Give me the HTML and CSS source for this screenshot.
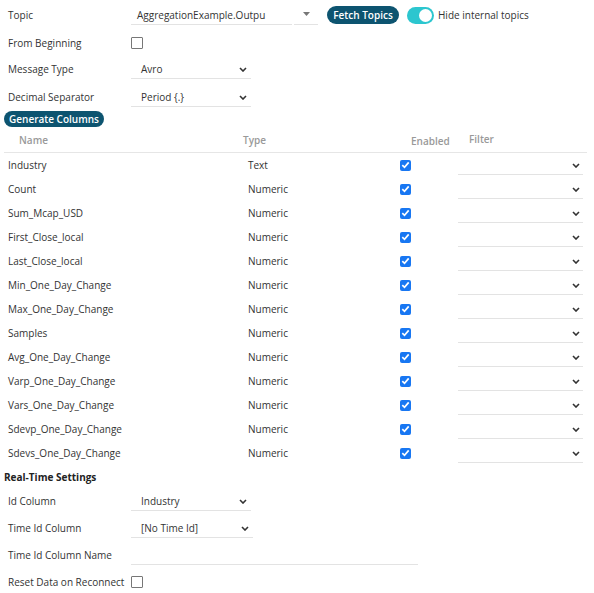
FILE: index.html
```html
<!DOCTYPE html>
<html>
<head>
<meta charset="utf-8">
<link rel="stylesheet" href="styles.css">
</head>
<body>
<div class="page">
  <div class="form-row r1">
    <div class="label">Topic</div>
    <div class="topic-field">
      <div class="topic-input">AggregationExample.Outpu</div>
      <div class="topic-btn"><svg width="7" height="4" viewBox="0 0 7 4"><path d="M0 0H7L3.5 4Z" fill="#777"/></svg></div>
    </div>
    <button class="pill fetch">Fetch Topics</button>
    <div class="toggle"><div class="knob"></div></div>
    <div class="toggle-label">Hide internal topics</div>
  </div>
  <div class="form-row r2">
    <div class="label">From Beginning</div>
    <div class="cb"></div>
  </div>
  <div class="form-row r3">
    <div class="label">Message Type</div>
    <div class="select w120"><span>Avro</span><svg class="chev" width="8" height="5" viewBox="0 0 8 5"><path d="M1 1L4 4L7 1" fill="none" stroke="#333" stroke-width="1.6"/></svg></div>
  </div>
  <div class="form-row r4">
    <div class="label">Decimal Separator</div>
    <div class="select w120"><span>Period {.}</span><svg class="chev" width="8" height="5" viewBox="0 0 8 5"><path d="M1 1L4 4L7 1" fill="none" stroke="#333" stroke-width="1.6"/></svg></div>
  </div>
  <button class="pill gen">Generate Columns</button>

  <div class="table">
    <div class="thead">
      <div class="th c-name">Name</div>
      <div class="th c-type">Type</div>
      <div class="th c-en">Enabled</div>
      <div class="th c-filter">Filter</div>
    </div>
    <div id="rows"></div>
  </div>

  <div class="section-title">Real-Time Settings</div>
  <div class="rt-row">
    <div class="label">Id Column</div>
    <div class="select w120"><span>Industry</span><svg class="chev" width="8" height="5" viewBox="0 0 8 5"><path d="M1 1L4 4L7 1" fill="none" stroke="#333" stroke-width="1.6"/></svg></div>
  </div>
  <div class="rt-row">
    <div class="label">Time Id Column</div>
    <div class="select w122"><span>[No Time Id]</span><svg class="chev" width="8" height="5" viewBox="0 0 8 5"><path d="M1 1L4 4L7 1" fill="none" stroke="#333" stroke-width="1.6"/></svg></div>
  </div>
  <div class="rt-row">
    <div class="label">Time Id Column Name</div>
    <div class="select w287"></div>
  </div>
  <div class="rt-row">
    <div class="label">Reset Data on Reconnect</div>
    <div class="cb"></div>
  </div>
</div>
<script src="script.js"></script>
</body>
</html>
```
FILE: script.js
```js
var data = [
  ["Industry","Text"],["Count","Numeric"],["Sum_Mcap_USD","Numeric"],
  ["First_Close_local","Numeric"],["Last_Close_local","Numeric"],
  ["Min_One_Day_Change","Numeric"],["Max_One_Day_Change","Numeric"],
  ["Samples","Numeric"],["Avg_One_Day_Change","Numeric"],
  ["Varp_One_Day_Change","Numeric"],["Vars_One_Day_Change","Numeric"],
  ["Sdevp_One_Day_Change","Numeric"],["Sdevs_One_Day_Change","Numeric"]
];
var html = "";
data.forEach(function (d) {
  html += '<div class="tr">' +
    '<div class="td c-name">' + d[0] + '</div>' +
    '<div class="td c-type">' + d[1] + '</div>' +
    '<div class="td c-en"><div class="cbx"><svg width="9" height="8" viewBox="0 0 9 8"><path d="M1.3 4.2L3.5 6.3L7.7 1.4" fill="none" stroke="#fff" stroke-width="1.7"/></svg></div></div>' +
    '<div class="td c-filter"><div class="fsel"><svg class="chev" width="8" height="5" viewBox="0 0 8 5"><path d="M1 1L4 4L7 1" fill="none" stroke="#333" stroke-width="1.6"/></svg></div></div>' +
    '</div>';
});
document.getElementById("rows").innerHTML = html;
```
FILE: styles.css
```css
* { box-sizing: border-box; }
html, body { margin: 0; padding: 0; background: #fff; }
body {
  font-family: "Open Sans", "Noto Sans", sans-serif;
  font-size: 10px;
  color: #333;
}
.page { padding-top: 3px; width: 594px; }
.form-row {
  display: flex;
  align-items: center;
  height: 24px;
  padding-left: 8px;
}
.r1 { margin-bottom: 4px; }
.r2 { margin-bottom: 2px; }
.r3 { margin-bottom: 4px; }
.label { width: 123px; flex: none; white-space: nowrap; }
.topic-field { display: flex; height: 20px; width: 187px; }
.topic-input {
  width: 161px;
  padding-left: 6px;
  display: flex;
  align-items: center;
  border-bottom: 1px solid #e3e3e3;
  overflow: hidden;
  white-space: nowrap;
}
.topic-btn {
  width: 24px;
  margin-left: 2px;
  display: flex;
  align-items: center;
  justify-content: center;
  border-bottom: 1px solid #e3e3e3;
  padding-bottom: 1px;
}
.pill {
  border: none;
  background: #0d5470;
  color: #fff;
  font-family: inherit;
  font-weight: 600;
  font-size: 10px;
  border-radius: 9px;
  padding: 0;
  display: flex;
  align-items: center;
  justify-content: center;
}
.fetch { width: 72px; height: 18px; margin-left: 9px; }
.toggle {
  width: 27px;
  height: 17px;
  margin-left: 8px;
  border-radius: 9px;
  background: #2cc6cf;
  position: relative;
}
.knob {
  position: absolute;
  right: 2px;
  top: 2px;
  width: 13px;
  height: 13px;
  border-radius: 50%;
  background: #fff;
}
.toggle-label { margin-left: 4px; }
.cb {
  width: 12px;
  height: 12px;
  border: 1px solid #777;
  border-radius: 1px;
}
.select {
  height: 20px;
  display: flex;
  align-items: center;
  justify-content: space-between;
  padding-left: 10px;
  padding-right: 4px;
  border-bottom: 1px solid #e3e3e3;
}
.w120 { width: 120px; }
.w122 { width: 122px; }
.w287 { width: 287px; }
.chev { display: block; margin-top: 1px; }
.gen { width: 100px; height: 16px; margin: 2px 0 0 4px; border-radius: 8px; }

.table { margin: 0 7px 0 4px; }
.thead {
  display: flex;
  align-items: center;
  height: 26px;
  border-bottom: 1px solid #e6e6e6;
  color: #999;
  font-weight: 600;
}
.tr { display: flex; align-items: center; height: 24px; }
.c-name { width: 240px; flex: none; }
.c-type { width: 156px; flex: none; }
.c-en { width: 58px; flex: none; }
.c-filter { width: 125px; flex: none; }
.td.c-name { padding-left: 4px; }
.td.c-type { padding-left: 4px; }
.th.c-name { padding-left: 15px; }
.th.c-type { padding-left: 0; margin-left: -1px; margin-right: 1px; }
.th.c-en { padding-left: 11px; margin-top: 2px; white-space: nowrap; }
.th.c-filter { padding-left: 11px; margin-top: -2px; }
.cbx {
  width: 11px;
  height: 11px;
  border-radius: 2px;
  background: #1877f2;
  display: flex;
  align-items: center;
  justify-content: center;
}
.cbx svg { display: block; }
.fsel {
  height: 20px;
  display: flex;
  align-items: center;
  justify-content: flex-end;
  padding-right: 3px;
  border-bottom: 1px solid #e3e3e3;
}

.section-title {
  height: 23px;
  display: flex;
  align-items: center;
  padding-left: 4px;
  font-weight: 700;
  color: #222;
}
.rt-row {
  display: flex;
  align-items: center;
  height: 26px;
  padding-left: 8px;
  margin-bottom: 1px;
}
```
